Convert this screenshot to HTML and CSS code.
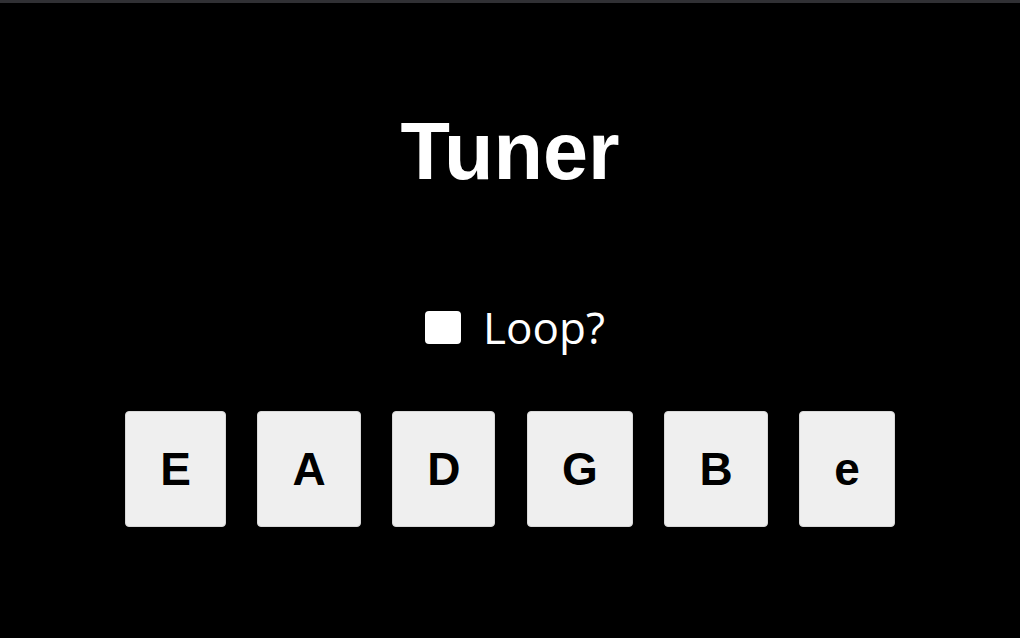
FILE: index.html
```html
<!DOCTYPE html>
<html>
<head>
<meta charset="utf-8">
<link rel="stylesheet" href="styles.css">
</head>
<body>
<div class="page">
  <h1 class="title">Tuner</h1>
  <label class="loop">
    <span class="box"></span>
    <span class="loop-text">Loop?</span>
  </label>
  <div class="strings">
    <button class="str">E</button>
    <button class="str">A</button>
    <button class="str">D</button>
    <button class="str">G</button>
    <button class="str">B</button>
    <button class="str">e</button>
  </div>
</div>
</body>
</html>
```
FILE: styles.css
```css
html, body {
  margin: 0;
  padding: 0;
  background: #000;
  height: 100%;
}
body {
  border-top: 3px solid #303034;
  box-sizing: border-box;
}
.page {
  display: flex;
  flex-direction: column;
  align-items: center;
}
.title {
  margin: 108px 0 0 0;
  height: 80px;
  font-family: "Liberation Sans", Arial, sans-serif;
  font-weight: bold;
  font-size: 81px;
  line-height: 80px;
  color: #fff;
}
.loop {
  margin-top: 114px;
  display: flex;
  align-items: center;
  gap: 22px;
  height: 44px;
  padding-left: 10px;
}
.box {
  width: 36px;
  height: 33px;
  background: #fff;
  border-radius: 4px;
}
.loop-text {
  font-family: "Open Sans", "Noto Sans", sans-serif;
  font-size: 44px;
  line-height: 44px;
  color: #fff;
}
.strings {
  margin-top: 62px;
  display: flex;
  gap: 31.6px;
}
.str {
  height: 116px;
  padding: 0 34px;
  margin: 0;
  background: #efefef;
  border: 1px solid #d8d8d8;
  border-radius: 4px;
  font-family: "Liberation Sans", Arial, sans-serif;
  font-weight: bold;
  font-size: 46px;
  color: #000;
}
```
